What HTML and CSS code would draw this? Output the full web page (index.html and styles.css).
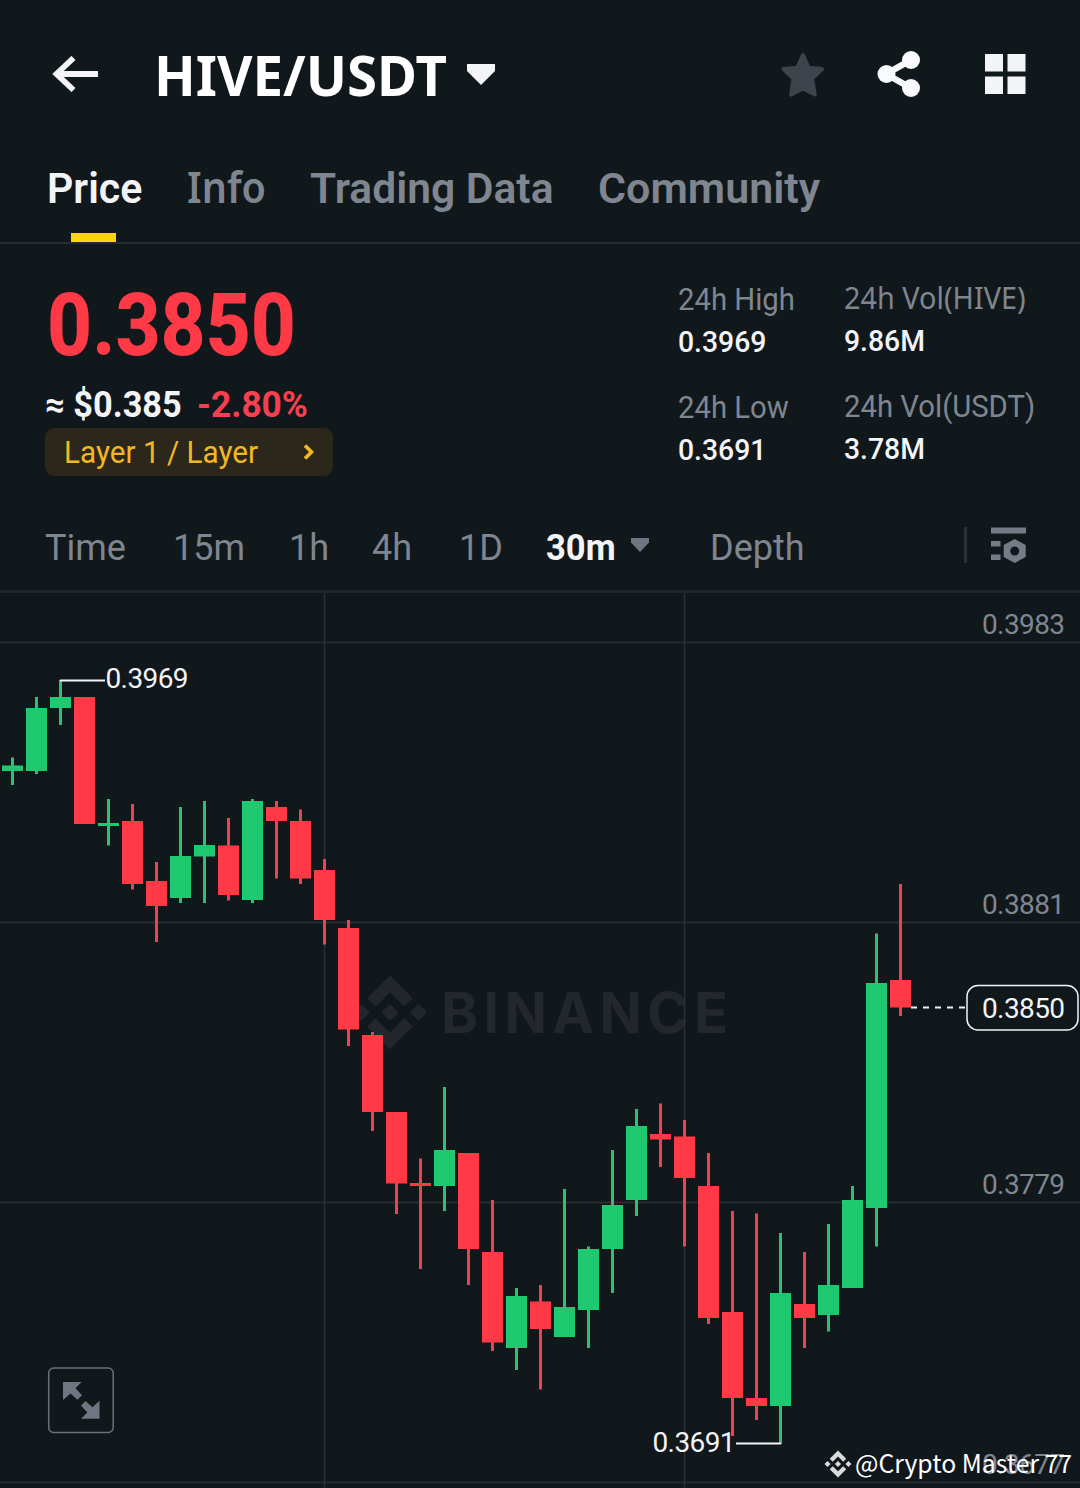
FILE: index.html
```html
<!DOCTYPE html>
<html lang="en">
<head>
<meta charset="utf-8">
<title>HIVE/USDT</title>
<link rel="stylesheet" href="styles.css">
</head>
<body>
<header class="topbar">
  <svg class="back" width="46" height="36" viewBox="0 0 46 36"><path d="M21.500 2 4.500 18l17 16M4 18h42" fill="none" stroke="#f3f4f7" stroke-width="5.8"/></svg>
  <h1 class="pair"><span class="fit">HIVE/USDT</span></h1>
  <svg class="pair-caret" width="28" height="21" viewBox="0 0 28 21"><path d="M0 0h28v7L14 21 0 7z" fill="#f3f4f7"/></svg>
  <div class="actions">
    <svg width="46" height="48" viewBox="0 0 46 48"><path d="M24 5l5.600 12.700 13.400 1.300-10 9.500L35.800 44.500 24 38.500 12.200 44.500 14.500 28.500 4.500 19 18.300 17.700z" fill="#3e444b" stroke="#3e444b" stroke-width="4" stroke-linejoin="round"/></svg>
    <svg width="44" height="46" viewBox="0 0 44 46"><path d="M34 9 9 23l25 14" fill="none" stroke="#f9fafb" stroke-width="6.500"/><g fill="#f9fafb"><circle cx="34" cy="9" r="9"/><circle cx="9.500" cy="23" r="9"/><circle cx="34" cy="37" r="9"/></g></svg>
    <svg width="41" height="40" viewBox="0 0 41 40"><path d="M0 0h18v17.500H0zM22.500 0h18v17.500h-18zM0 22.500h18V40H0zM22.500 22.500h18V40h-18z" fill="#f3f4f7"/></svg>
  </div>
</header>

<nav class="tabs">
  <a class="tab active"><span class="fit">Price</span></a>
  <a class="tab"><span class="fit info">Info</span></a>
  <a class="tab"><span class="fit trading">Trading Data</span></a>
  <a class="tab"><span class="fit">Community</span></a>
</nav>

<section class="summary">
  <div class="quote">
    <div class="last"><span class="fit">0.3850</span></div>
    <div class="change"><span class="fit usd">≈ $0.385</span><span class="fit pct">-2.80%</span></div>
    <a class="tag"><span class="fit">Layer 1 / Layer</span>
      <svg width="12" height="16" viewBox="0 0 12 16"><path d="M2 1.500 8.500 8 2 14.500" fill="none" stroke="#f3b722" stroke-width="3.600"/></svg>
    </a>
  </div>
  <dl class="stats">
    <div><dt><span class="fit">24h High</span></dt><dd><span class="fit">0.3969</span></dd></div>
    <div class="vol"><dt><span class="fit hive">24h Vol(HIVE)</span></dt><dd><span class="fit">9.86M</span></dd></div>
    <div><dt><span class="fit">24h Low</span></dt><dd><span class="fit">0.3691</span></dd></div>
    <div class="vol"><dt><span class="fit">24h Vol(USDT)</span></dt><dd><span class="fit">3.78M</span></dd></div>
  </dl>
</section>

<nav class="frames">
  <span>Time</span><span>15m</span><span>1h</span><span>4h</span><span>1D</span>
  <span class="selected"><b class="fit">30m</b><svg width="18" height="14" viewBox="0 0 18 14"><path d="M0 0h18v4.500L9 14 0 4.500z" fill="#6f7681"/></svg></span>
  <span class="depth">Depth</span>
  <div class="settings">
    <svg width="35" height="36" viewBox="0 0 35 36"><path d="M0 .5h35v6H0zM0 14h9.500v5.500H0zM0 27.500h9.500V33H0z" fill="#757c87"/><path fill-rule="evenodd" d="M23.700 12 34.700 18v12L23.700 36 12.700 30V18zM23.700 19.500a4.500 4.500 0 1 0 0 9 4.500 4.500 0 0 0 0-9z" fill="#757c87"/></svg>
  </div>
</nav>

<main class="chart">
  <svg id="plot" width="1080" height="898" viewBox="0 590 1080 898">
    <g id="mark" fill="#23272d">
      <g transform="translate(353 975.500) scale(.584)"><path id="logo" d="M38.730 53.200l24.590-24.580 24.600 24.600 14.300-14.310L63.320 0 24.420 38.900zM0 63.310L14.300 49l14.310 14.310-14.310 14.300zM38.730 73.410l24.590 24.590 24.600-24.600 14.310 14.290-38.900 38.910-38.910-38.880zM98 63.310l14.300-14.310 14.310 14.300-14.310 14.320zM77.830 63.300L63.320 48.780 48.810 63.280l14.510 14.500z"/></g>
      <text class="brand" x="441" y="1033" textLength="287" lengthAdjust="spacing">BINANCE</text>
    </g>
    <g class="grid">
      <path d="M0 642.500H1080M0 922.500H1080M0 1202.500H1080M0 1482.500H1080M324.500 592V1488M684.500 592V1488"/>
    </g>
    <rect x="0" y="590" width="1080" height="3" fill="#20252b"/>
    <g class="axis">
      <text x="982" y="634" textLength="83">0.3983</text>
      <text x="982" y="914" textLength="83">0.3881</text>
      <text x="982" y="1194" textLength="83">0.3779</text>
      <text x="982" y="1474" textLength="83">0.3677</text>
    </g>
    <g id="candles"></g>
    <g class="callout">
      <path d="M60 680.500H105M736 1443.500H781"/>
      <path d="M911 1007.500H966" stroke-dasharray="6 6"/>
      <rect x="967" y="985.500" width="111" height="44.500" rx="11"/>
      <text x="105.500" y="688" textLength="83">0.3969</text>
      <text x="652.500" y="1452" textLength="83">0.3691</text>
      <text x="982" y="1018" textLength="83">0.3850</text>
    </g>
    <g fill="#6f7681">
      <rect x="48.700" y="1368" width="64.500" height="64.500" rx="5" fill="none" stroke="#68707a" stroke-width="1.500"/>
      <path d="M63 1382h18.500l-6 6.300 6.500 7-4.500 4.500-7-6.300-7.500 6.500zM99.500 1418.700H81l6.300-6.300-6.300-7 4.500-4.500 7 6.300 7-6.500z"/>
    </g>
    <g transform="translate(824.500 1450.500) scale(.213)" fill="#d9dadb"><use href="#logo"/></g>
    <text class="credit" x="855" y="1473" textLength="217" lengthAdjust="spacingAndGlyphs">@Crypto Master 77</text>
  </svg>
</main>
<script src="chart.js"></script>
</body>
</html>
```
FILE: styles.css
```css
* { box-sizing: border-box; }
body {
  margin: 0;
  width: 1080px;
  height: 1488px;
  overflow: hidden;
  display: flex;
  flex-direction: column;
  background: #11181c;
  color: #f3f4f7;
  font-family: Roboto, "Liberation Sans", sans-serif;
}
svg { display: block; flex: none; }
.fit { display: inline-block; transform-origin: 0 50%; white-space: nowrap; }

.topbar { height: 148px; display: flex; align-items: center; padding: 0 54px 0 52px; }
.pair { margin: 0 0 0 56px; width: 313px; font: 700 56px/80px "Noto Sans", sans-serif; color: #fff; }
.pair .fit { transform: scaleX(.975); }
.actions { margin-left: auto; display: flex; align-items: center; gap: 52px; }
.actions svg:last-child { margin-left: 12px; }

.tabs {
  height: 96px;
  padding-left: 47px;
  display: grid;
  grid-template-columns: 140px 123px 288px auto;
  border-bottom: 2px solid #262c31;
  font-size: 43px;
  font-weight: 600;
  line-height: 81px;
  color: #7f8690;
}
.tab { position: relative; }
.tab.active { color: #f3f4f7; }
.tab.active .fit { transform: scaleX(.955); }
.tab.active::after { content: ""; position: absolute; left: 24px; bottom: 0; width: 45px; height: 9px; background: #fcd50f; }
.info { font-family: "Noto Sans", sans-serif; line-height: 78px; transform: scaleX(.92); }
.trading { transform: scaleX(.99); }

.summary { height: 260px; padding: 36px 0 0 45px; display: flex; }
.quote { width: 633px; }
.last { height: 90px; padding-left: 2px; font-size: 88px; line-height: 90px; font-weight: 800; color: #ff3a46; }
.last .fit { transform: scaleX(.89); }
.change { height: 58px; padding-top: 12px; display: flex; font-size: 36px; font-weight: 700; line-height: 47px; }
.usd { width: 152px; transform: scaleX(.953); }
.pct { color: #f6404f; transform: scaleX(.98); }
.tag { width: 288px; height: 48px; padding: 0 18px 0 19px; display: flex; align-items: center; justify-content: space-between; border-radius: 9px; background: #2b281b; color: #f3b722; font-size: 31px; }
.tag .fit { transform: scaleX(.957); }
.stats { margin: 0; display: grid; grid-template-columns: 166px 230px; grid-auto-rows: 108px; align-content: start; }
.stats dt, .stats dd { margin: 0; height: 42px; line-height: 40px; }
.stats dt { font-size: 31px; font-weight: 450; color: #7f8690; }
.stats dd { font-size: 30px; font-weight: 500; }
.stats .fit { transform: scaleX(.945); }
.stats .hive { font-family: "Noto Sans", sans-serif; font-weight: 400; line-height: 37px; transform: scaleX(.93); }
.vol { margin-top: -1px; }

.frames {
  height: 86px;
  padding: 0 54px 0 45px;
  display: grid;
  grid-template-columns: 128px 116px 83px 87px 87px 164px 200px 1fr;
  font-size: 36px;
  font-weight: 450;
  line-height: 89px;
  color: #7f8690;
}
.selected { display: flex; color: #f3f4f7; }
.selected .fit { transform: scaleX(.96); }
.selected svg { margin: 34px 0 0 12px; }
.selected .fit { line-height: 88px; }
.settings { align-self: start; justify-self: end; margin-top: 23px; padding-left: 24px; border-left: 3px solid #2b3036; }

.grid { fill: none; stroke: #293034; stroke-width: 1.5; }
.axis text, .callout text { font-size: 28px; }
.axis { fill: #7f8690; }
.callout path, .callout rect { fill: none; stroke: #f3f4f7; stroke-width: 2; }
.callout rect { stroke-width: 1.5; }
.callout text { fill: #f3f4f7; }
.brand { font: 700 56px Inter, sans-serif; }
.credit { font: 400 25px "Noto Sans CJK SC", "Noto Sans", sans-serif; fill: #fff; }
.up { fill: #1fc96f; }
.down { fill: #ff3a46; }
.up .wick { fill: #34bd73; }
.down .wick { fill: #e84452; }
```
FILE: chart.js
```js
// Each candle: direction, then high, body top, body bottom and low on the price axis.
const candles = [
  ["up", 757.5, 765.5, 771, 785], ["up", 697, 708, 771, 774], ["up", 680, 697, 708, 725],
  ["down", 697, 697, 824, 824], ["up", 799, 823, 826, 845.5], ["down", 804, 821, 884, 889.5],
  ["down", 862, 881, 906, 942], ["up", 807, 856, 898, 903], ["up", 801, 845, 856.5, 903],
  ["down", 818, 845.5, 895, 900.5], ["up", 799, 801, 900, 903], ["down", 801, 807, 821, 878.5],
  ["down", 809.5, 821, 878.5, 884], ["down", 859, 870, 920, 944.5], ["down", 920, 928, 1029.5, 1046],
  ["down", 1032, 1035, 1112, 1131], ["down", 1112, 1112, 1183.5, 1214], ["down", 1158.5, 1183, 1186, 1269],
  ["up", 1087, 1150, 1186, 1211], ["down", 1153, 1153, 1249, 1285], ["down", 1200, 1252, 1342.5, 1351],
  ["up", 1288, 1296, 1348, 1370], ["down", 1285, 1301.5, 1329, 1389.5], ["up", 1189, 1307, 1337, 1337],
  ["up", 1246.5, 1249, 1310, 1348], ["up", 1150, 1205, 1249, 1293], ["up", 1109, 1126, 1200, 1216],
  ["down", 1103.5, 1134, 1139.5, 1167], ["down", 1120, 1136.5, 1178, 1246.5], ["down", 1153, 1186, 1318, 1324],
  ["down", 1211, 1312, 1398, 1436], ["down", 1213.5, 1398, 1406, 1420], ["up", 1233, 1293, 1406, 1444],
  ["down", 1252, 1304, 1318, 1348], ["up", 1224, 1285, 1315, 1331.5], ["up", 1186, 1200, 1288, 1288],
  ["up", 933.5, 983, 1208, 1246.5], ["down", 884, 980, 1007.5, 1016]
];
document.getElementById("candles").innerHTML = candles.map(([dir, high, top, bottom, low], i) => {
  const x = 2 + 24 * i;
  return `<g class="${dir}"><rect class="wick" x="${x + 9}" y="${high}" width="3" height="${low - high}"/>` +
    `<rect x="${x}" y="${top}" width="21" height="${bottom - top}"/></g>`;
}).join("");
```
